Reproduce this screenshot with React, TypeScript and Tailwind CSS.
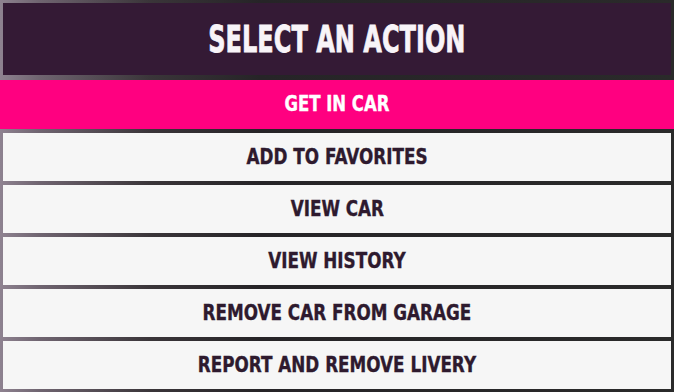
import React from "react";

const items = [
  "ADD TO FAVORITES",
  "VIEW CAR",
  "VIEW HISTORY",
  "REMOVE CAR FROM GARAGE",
  "REPORT AND REMOVE LIVERY",
];

const font = {
  fontFamily: '"DejaVu Sans", "Liberation Sans", sans-serif',
};

export default function App() {
  return (
    <div
      className="w-[674px] h-[392px] flex flex-col bg-[linear-gradient(to_right,#8e8290_0px,#6f6470_40px,#3a3539_150px,#262427_260px,#2a2a2a_100%)]"
      style={font}
    >
      <div className="mx-[3px] mt-[3px] h-[72px] bg-[#341a35] flex items-center justify-center">
        <span className="inline-block whitespace-nowrap [transform:scaleX(0.65)] [-webkit-text-stroke:0.8px_#f8f4f8] text-[#f8f4f8] font-bold text-[37px] leading-none">SELECT AN ACTION</span>
      </div>
      <div className="mt-[5px] h-[49px] bg-[#ff0080] flex items-center justify-center">
        <span className="inline-block whitespace-nowrap [transform:scaleX(0.785)] [-webkit-text-stroke:0.4px_#ffffff] text-white font-bold text-[21px] leading-none">GET IN CAR</span>
      </div>
      <div className="mt-[4px] px-[3px] flex flex-col gap-[4px]">
        {items.map((t) => (
          <div key={t} className="h-[48px] bg-[#f6f6f6] flex items-center justify-center">
            <span className="inline-block whitespace-nowrap [transform:scaleX(0.8)] [-webkit-text-stroke:0.4px_#2e1a2e] text-[#2e1a2e] font-bold text-[21px] leading-none">{t}</span>
          </div>
        ))}
      </div>
    </div>
  );
}
